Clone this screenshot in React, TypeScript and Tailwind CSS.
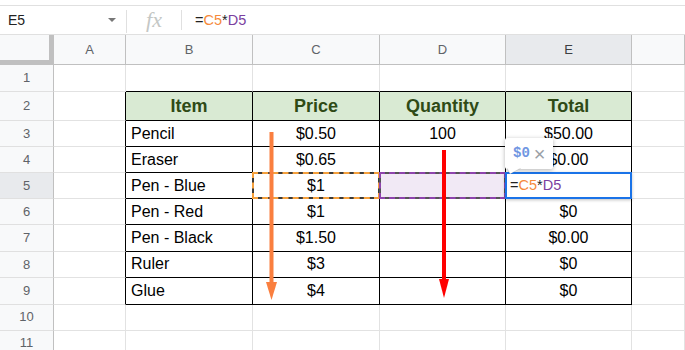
import React from "react";

const COLS = "grid grid-cols-[54px_72px_127px_127px_126px_126px_53px]";

const data: string[][] = [
  ["Pencil", "$0.50", "100", "$50.00"],
  ["Eraser", "$0.65", "", "$0.00"],
  ["Pen - Blue", "$1", "", ""],
  ["Pen - Red", "$1", "", "$0"],
  ["Pen - Black", "$1.50", "", "$0.00"],
  ["Ruler", "$3", "", "$0"],
  ["Glue", "$4", "", "$0"],
];

function Formula({ size }: { size: string }) {
  return (
    <span className={size}>
      <span className="text-[#222]">=</span>
      <span className="text-[#f68a3c]">C5</span>
      <span className="text-[#222]">*</span>
      <span className="text-[#7b3fa0]">D5</span>
    </span>
  );
}

function RowHeader({ n, sel }: { n: number; sel?: boolean }) {
  return (
    <div
      className={`flex items-center justify-center border-r border-b border-r-[#c0c0c0] border-b-[#e0e0e0] text-[13px] text-[#5f6368] ${
        sel ? "bg-[#e8eaed]" : "bg-[#f8f9fa]"
      }`}
    >
      {n}
    </div>
  );
}

function Empty({ cls = "" }: { cls?: string }) {
  return <div className={`border-r border-b border-[#e2e2e2] ${cls}`} />;
}

export default function App() {
  return (
    <div className="relative w-[685px] h-[350px] overflow-hidden bg-white font-['Liberation_Sans',Arial,sans-serif] text-black">
      {/* top strip */}
      <div className="h-[6px] border-b border-[#e0e0e0]" />
      {/* formula bar */}
      <div className="h-[29px] flex items-center border-b border-[#e0e0e0]">
        <div className="w-[126px] flex items-center justify-between pl-[8px] pr-[10px]">
          <span className="text-[14px] text-[#222]">E5</span>
          <svg width="8" height="5" viewBox="0 0 8 5">
            <polygon points="0,0 8,0 4,4" fill="#777" />
          </svg>
        </div>
        <div className="w-px h-[23px] bg-[#e0e0e0] self-end mb-[1px]" />
        <div className="w-[54px] flex justify-center">
          <span className="font-['Liberation_Serif',serif] italic text-[22px] leading-none text-[#c4c7c5]">fx</span>
        </div>
        <div className="w-px h-[20px] bg-[#e0e0e0]" />
        <div className="pl-[13px]">
          <Formula size="text-[14.5px]" />
        </div>
      </div>

      {/* column headers */}
      <div className={`${COLS} h-[30px]`}>
        <div className="bg-[#f8f9fa] border-r-[5px] border-b-[5px] border-[#c0c0c0]" />
        {["A", "B", "C", "D", "E", "F"].map((c) => (
          <div
            key={c}
            className={`flex items-center justify-center border-r border-b border-[#c0c0c0] text-[13px] ${
              c === "E" ? "bg-[#e8eaed] text-[#3c4043]" : "bg-[#f8f9fa] text-[#5f6368]"
            }`}
          >
            {c === "F" ? "" : c}
          </div>
        ))}
      </div>

      {/* row 1 */}
      <div className={`${COLS} h-[27px]`}>
        <RowHeader n={1} />
        <Empty />
        <Empty cls="border-b-black" />
        <Empty cls="border-b-black" />
        <Empty cls="border-b-black" />
        <Empty cls="border-b-black" />
        <Empty />
      </div>

      {/* row 2 header */}
      <div className={`${COLS} h-[29px]`}>
        <RowHeader n={2} />
        <Empty cls="border-r-black" />
        {["Item", "Price", "Quantity", "Total"].map((t) => (
          <div
            key={t}
            className="flex items-center justify-center bg-[#d9ead3] border-r border-b border-black text-[18px] font-bold text-[#2f4a16]"
          >
            {t}
          </div>
        ))}
        <Empty />
      </div>

      {/* data rows */}
      {data.map((r, i) => {
        const n = i + 3;
        const isSel = n === 5;
        return (
          <div key={n} className={`${COLS} ${n >= 7 ? "h-[26.5px]" : "h-[26px]"}`}>
            <RowHeader n={n} sel={isSel} />
            <Empty cls="border-r-black" />
            <div className="flex items-center pl-[5px] border-r border-b border-black text-[16px]">{r[0]}</div>
            <div className="relative flex items-center justify-center border-r border-b border-black text-[16px]">
              {r[1]}
              {isSel && (
                <>
                  <div className="absolute -top-px -left-px -right-px -bottom-px border-2 border-[#3a3a3a]" />
                  <div className="absolute -top-px -left-px -right-px -bottom-px border-2 border-dashed border-[#f5a03c]" />
                </>
              )}
            </div>
            <div className="relative flex items-center justify-center border-r border-b border-black text-[16px]">
              {r[2]}
              {isSel && (
                <>
                  <div className="absolute -top-px -left-px -right-px -bottom-px border-2 border-[#555] bg-[#f1e9f5]" />
                  <div className="absolute -top-px -left-px -right-px -bottom-px border-2 border-dashed border-[#8e44ad]" />
                </>
              )}
            </div>
            <div className="relative flex items-center justify-center border-r border-b border-black text-[16px]">
              {r[3]}
              {isSel && (
                <div className="absolute -top-px -left-px -right-px -bottom-px border-2 border-[#1a73e8] bg-white flex items-center pl-[3px] shadow-[0_1px_3px_rgba(0,0,0,0.25)]">
                  <Formula size="text-[14.5px]" />
                </div>
              )}
            </div>
            <Empty />
          </div>
        );
      })}

      {/* rows 10, 11 */}
      {[10, 11].map((n) => (
        <div key={n} className={`${COLS} h-[26px]`}>
          <RowHeader n={n} />
          <Empty />
          <Empty />
          <Empty />
          <Empty />
          <Empty />
          <Empty />
        </div>
      ))}

      {/* value preview tooltip */}
      <div className="absolute left-[505px] top-[138px] w-[48px] h-[31px] bg-white rounded-[2px] shadow-[0_1px_4px_rgba(0,0,0,0.3)] flex items-center pl-[8px] gap-[4px]">
        <span className="font-['Liberation_Mono',monospace] font-bold text-[14px] text-[#7096e2]">$0</span>
        <span className="text-[20px] leading-none text-[#9aa0a6]">×</span>
      </div>
      <svg className="absolute left-[507px] top-[168px]" width="14" height="6" viewBox="0 0 14 6">
        <polygon points="0,0 14,0 3,6" fill="white" />
        <polyline points="0,0 3,6 14,0" fill="none" stroke="rgba(0,0,0,0.15)" strokeWidth="0.8" />
      </svg>

      {/* arrows */}
      <svg className="absolute left-0 top-0 pointer-events-none" width="685" height="350">
        <line x1="271.5" y1="132" x2="271.5" y2="285" stroke="#fa7f3f" strokeWidth="4" />
        <polygon points="266,282 277,282 271.5,300" fill="#fa7f3f" />
        <line x1="444" y1="150" x2="444" y2="282" stroke="#ff0000" strokeWidth="4" />
        <polygon points="439,279 449,279 444,298" fill="#ff0000" />
      </svg>
    </div>
  );
}
